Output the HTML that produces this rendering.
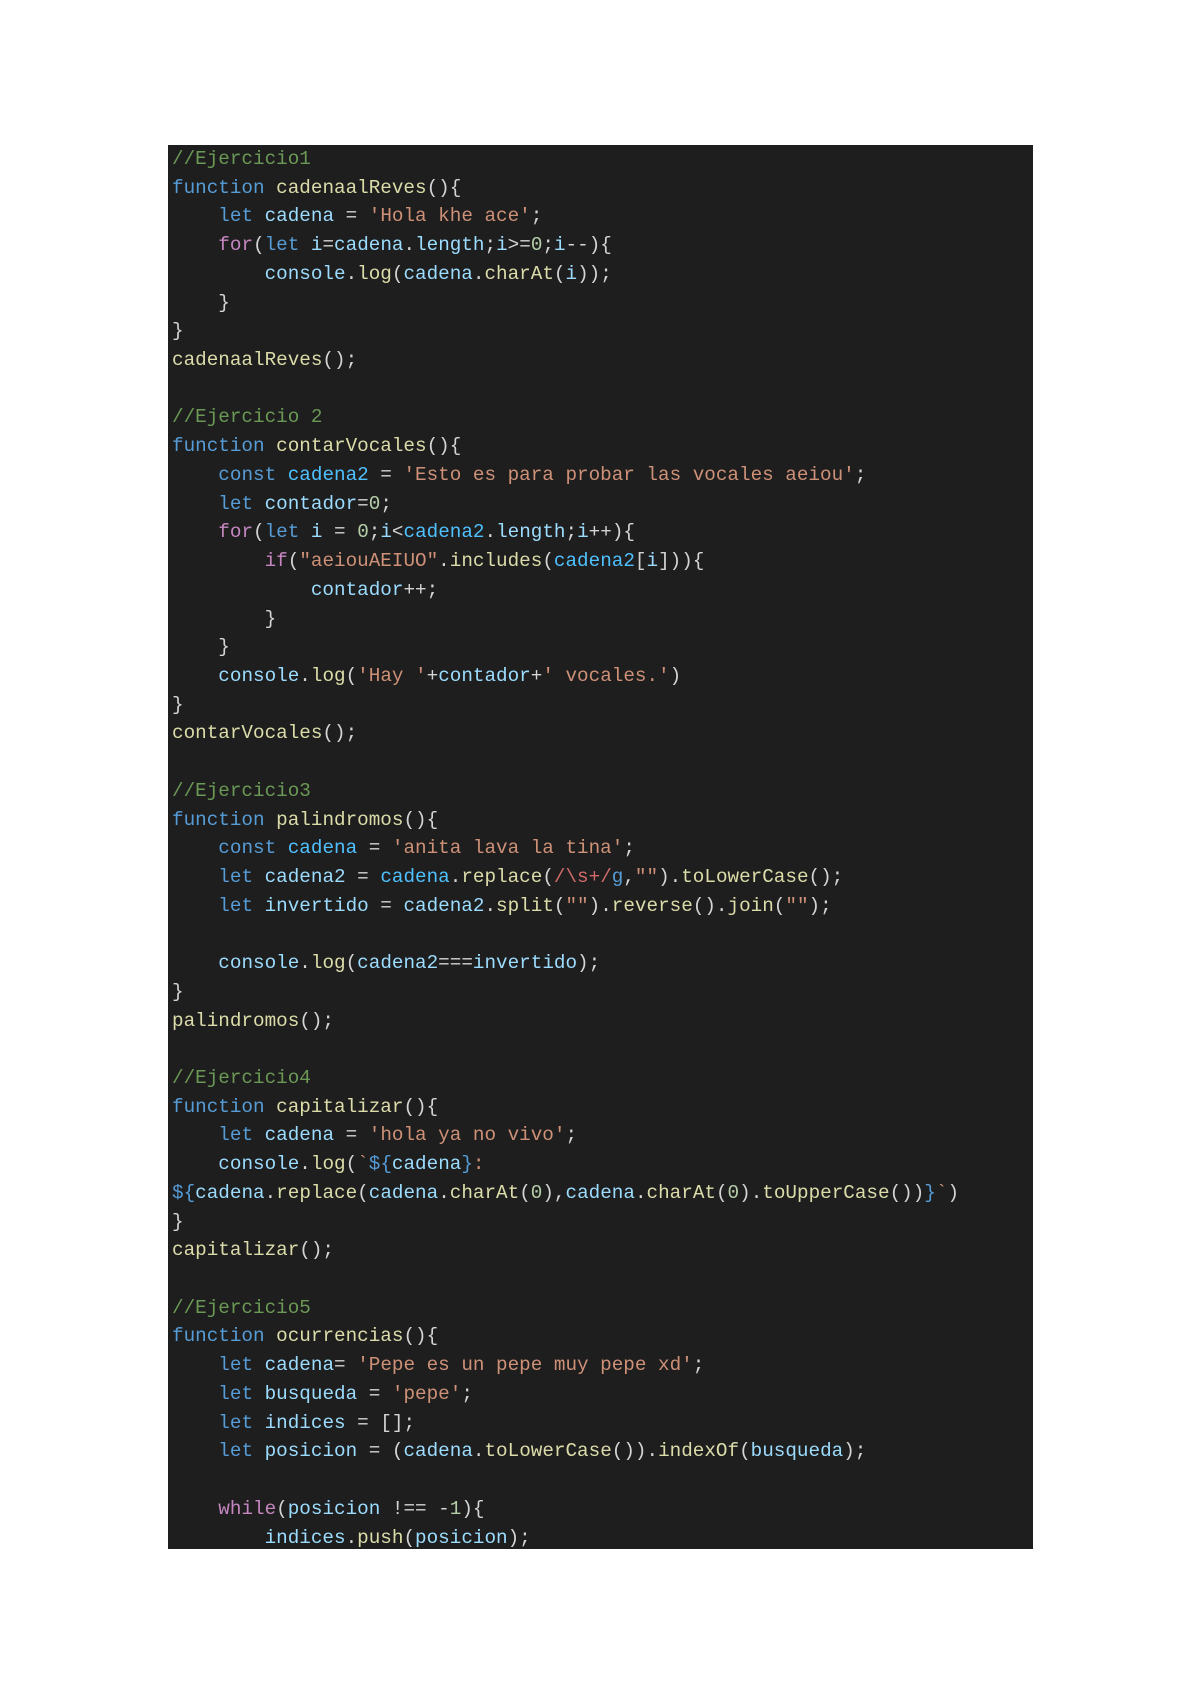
<!DOCTYPE html>
<html><head><meta charset="utf-8"><style>
body{margin:0;background:#fff;width:1200px;height:1696px;position:relative;overflow:hidden}
pre{position:absolute;left:168px;top:145px;width:865px;height:1404px;margin:0;padding:0 0 0 4px;box-sizing:border-box;background:#1e1e1e;overflow:hidden;font-family:"Liberation Mono",monospace;font-size:19.3px;line-height:28.72px;color:#d4d4d4;white-space:pre}
.c{color:#6a9955}.k{color:#569cd6}.f{color:#dcdcaa}.v{color:#9cdcfe}.s{color:#ce9178}.p{color:#c586c0}.n{color:#b5cea8}.r{color:#d16969}
</style></head><body><pre><span class="c">//Ejercicio1</span>
<span class="k">function</span> <span class="f">cadenaalReves</span>(){
    <span class="k">let</span> <span class="v">cadena</span> = <span class="s">'Hola khe ace'</span>;
    <span class="p">for</span>(<span class="k">let</span> <span class="v">i</span>=<span class="v">cadena</span>.<span class="v">length</span>;<span class="v">i</span>&gt;=<span class="n">0</span>;<span class="v">i</span>--){
        <span class="v">console</span>.<span class="f">log</span>(<span class="v">cadena</span>.<span class="f">charAt</span>(<span class="v">i</span>));
    }
}
<span class="f">cadenaalReves</span>();

<span class="c">//Ejercicio 2</span>
<span class="k">function</span> <span class="f">contarVocales</span>(){
    <span class="k">const</span> <span class="v" style="color:#4fc1ff">cadena2</span> = <span class="s">'Esto es para probar las vocales aeiou'</span>;
    <span class="k">let</span> <span class="v">contador</span>=<span class="n">0</span>;
    <span class="p">for</span>(<span class="k">let</span> <span class="v">i</span> = <span class="n">0</span>;<span class="v">i</span>&lt;<span class="v" style="color:#4fc1ff">cadena2</span>.<span class="v">length</span>;<span class="v">i</span>++){
        <span class="p">if</span>(<span class="s">"aeiouAEIUO"</span>.<span class="f">includes</span>(<span class="v" style="color:#4fc1ff">cadena2</span>[<span class="v">i</span>])){
            <span class="v">contador</span>++;
        }
    }
    <span class="v">console</span>.<span class="f">log</span>(<span class="s">'Hay '</span>+<span class="v">contador</span>+<span class="s">' vocales.'</span>)
}
<span class="f">contarVocales</span>();

<span class="c">//Ejercicio3</span>
<span class="k">function</span> <span class="f">palindromos</span>(){
    <span class="k">const</span> <span class="v" style="color:#4fc1ff">cadena</span> = <span class="s">'anita lava la tina'</span>;
    <span class="k">let</span> <span class="v">cadena2</span> = <span class="v" style="color:#4fc1ff">cadena</span>.<span class="f">replace</span>(<span class="r">/\s+/</span><span class="k">g</span>,<span class="s">""</span>).<span class="f">toLowerCase</span>();
    <span class="k">let</span> <span class="v">invertido</span> = <span class="v">cadena2</span>.<span class="f">split</span>(<span class="s">""</span>).<span class="f">reverse</span>().<span class="f">join</span>(<span class="s">""</span>);

    <span class="v">console</span>.<span class="f">log</span>(<span class="v">cadena2</span>===<span class="v">invertido</span>);
}
<span class="f">palindromos</span>();

<span class="c">//Ejercicio4</span>
<span class="k">function</span> <span class="f">capitalizar</span>(){
    <span class="k">let</span> <span class="v">cadena</span> = <span class="s">'hola ya no vivo'</span>;
    <span class="v">console</span>.<span class="f">log</span>(<span class="s">`</span><span class="k">${</span><span class="v">cadena</span><span class="k">}</span><span class="s">:</span>
<span class="k">${</span><span class="v">cadena</span>.<span class="f">replace</span>(<span class="v">cadena</span>.<span class="f">charAt</span>(<span class="n">0</span>),<span class="v">cadena</span>.<span class="f">charAt</span>(<span class="n">0</span>).<span class="f">toUpperCase</span>())<span class="k">}</span><span class="s">`</span>)
}
<span class="f">capitalizar</span>();

<span class="c">//Ejercicio5</span>
<span class="k">function</span> <span class="f">ocurrencias</span>(){
    <span class="k">let</span> <span class="v">cadena</span>= <span class="s">'Pepe es un pepe muy pepe xd'</span>;
    <span class="k">let</span> <span class="v">busqueda</span> = <span class="s">'pepe'</span>;
    <span class="k">let</span> <span class="v">indices</span> = [];
    <span class="k">let</span> <span class="v">posicion</span> = (<span class="v">cadena</span>.<span class="f">toLowerCase</span>()).<span class="f">indexOf</span>(<span class="v">busqueda</span>);

    <span class="p">while</span>(<span class="v">posicion</span> !== -<span class="n">1</span>){
        <span class="v">indices</span>.<span class="f">push</span>(<span class="v">posicion</span>);
</pre></body></html>
